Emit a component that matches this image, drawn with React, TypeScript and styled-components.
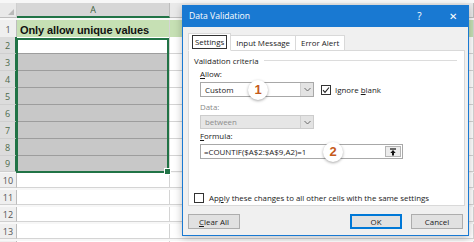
import React from 'react';
import styled, { createGlobalStyle } from 'styled-components';

const GlobalStyle = createGlobalStyle`
  html, body {
    margin: 0;
    padding: 0;
    width: 474px;
    height: 242px;
    overflow: hidden;
    background: #ffffff;
  }
`

const Stage = styled.div`
  position: relative;
  width: 474px;
  height: 242px;
  overflow: hidden;
  background: #ffffff;
`

/* ---------- spreadsheet ---------- */
const Sheet = styled.div`
  display: grid;
  grid-template-columns: 17px 153px 1fr;
  grid-auto-rows: 17px;
  width: 474px;
  padding-top: 3px;
  background: #f7f7f7;
  font-family: 'Open Sans', 'Noto Sans', sans-serif;
`

const Corner = styled.div`
  height: 15px;
  background: #e9e9e9;
  border-right: 1px solid #cfcfcf;
  border-bottom: 1px solid #bdbdbd;
  box-sizing: border-box;
  position: relative;
  &::after {
    content: '';
    position: absolute;
    right: 2px;
    bottom: 2px;
    border-left: 6px solid transparent;
    border-bottom: 6px solid #b9b9b9;
  }
`

const ColHead = styled.div<{ active?: boolean }>`
  height: 15px;
  box-sizing: border-box;
  display: flex;
  align-items: center;
  justify-content: center;
  font-size: 9px;
  color: ${p => (p.active ? '#3b5e3b' : '#555')};
  background: ${p => (p.active ? '#d6d6d6' : '#e9e9e9')};
  border-right: 1px solid #bdbdbd;
  border-bottom: ${p => (p.active ? '2px solid #217346' : '1px solid #bdbdbd')};
`

const RowHead = styled.div<{ active?: boolean; h: number }>`
  height: ${p => p.h}px;
  box-sizing: border-box;
  display: flex;
  align-items: center;
  justify-content: center;
  font-size: 9px;
  color: ${p => (p.active ? '#4d6b4d' : '#555')};
  background: ${p => (p.active ? '#dcdcdc' : '#efefef')};
  border-right: ${p => (p.active ? '2px solid #217346' : '1px solid #bdbdbd')};
  border-bottom: 1px solid #cfcfcf;
`

const Cell = styled.div<{ fill: string; line: string; h: number }>`
  height: ${p => p.h}px;
  box-sizing: border-box;
  background: ${p => p.fill};
  border-bottom: 1px solid ${p => p.line};
  border-right: 1px solid #d4d4d4;
  display: flex;
  align-items: center;
  padding-left: 3px;
`

const HeadText = styled.span`
  font-family: 'Liberation Sans', Arial, sans-serif;
  font-weight: 700;
  font-size: 11px;
  color: #111;
  letter-spacing: -0.1px;
`

const Selection = styled.div`
  position: absolute;
  left: 16px;
  top: 38px;
  width: 153px;
  height: 135px;
  border: 2px solid #217346;
  box-sizing: border-box;
  pointer-events: none;
  &::after {
    content: '';
    position: absolute;
    right: -4px;
    bottom: -4px;
    width: 5px;
    height: 5px;
    background: #217346;
    border: 1px solid #fff;
  }
`

/* ---------- dialog ---------- */
const Dialog = styled.div`
  position: absolute;
  left: 182px;
  top: 5px;
  width: 287px;
  height: 231px;
  display: flex;
  flex-direction: column;
  background: #f0f0f0;
  border: 1px solid #1979d2;
  border-top: none;
  box-sizing: border-box;
  box-shadow: 0 2px 8px rgba(0, 0, 0, 0.25);
  font-family: 'Open Sans', 'Noto Sans', sans-serif;
  font-size: 7.9px;
  color: #1a1a1a;
`

const TitleBar = styled.div`
  height: 22px;
  margin: 0 -1px;
  background: #1979d2;
  color: #fff;
  display: flex;
  align-items: center;
  padding: 0 0 0 7px;
  font-size: 8.6px;
  span:first-child {
    flex: 1;
  }
`

const TitleBtn = styled.span`
  width: 33px;
  text-align: center;
  font-size: 10px;
`

const Body = styled.div`
  flex: 1;
  display: flex;
  flex-direction: column;
  padding: 4px 3px 0 5px;
`

const Tabs = styled.div`
  display: flex;
  align-items: flex-end;
  height: 19px;
`

const Tab = styled.div<{ selected?: boolean }>`
  height: ${p => (p.selected ? 18 : 16)}px;
  box-sizing: border-box;
  padding: 0 5px;
  display: flex;
  align-items: center;
  background: #fff;
  border: 1px solid #d9d9d9;
  border-bottom: ${p => (p.selected ? '1px solid #fff' : '1px solid #d9d9d9')};
  margin-bottom: -1px;
  margin-left: ${p => (p.selected ? 0 : -1)}px;
  position: relative;
  z-index: ${p => (p.selected ? 2 : 1)};
`

const Focus = styled.span`
  outline: 1px solid #333;
  outline-offset: 1px;
  padding: 0 1px;
`

const Panel = styled.div`
  height: 156px;
  box-sizing: border-box;
  background: #fff;
  border: 1px solid #d9d9d9;
  padding: 4px 7px 0 5px;
  display: flex;
  flex-direction: column;
`

const Legend = styled.div`
  display: flex;
  align-items: center;
  gap: 5px;
  height: 11px;
  &::after {
    content: '';
    flex: 1;
    border-top: 1px solid #dcdcdc;
  }
`

const Group = styled.div`
  padding-left: 6px;
  display: flex;
  flex-direction: column;
`

const Label = styled.div<{ disabled?: boolean; gap?: number }>`
  height: 10px;
  line-height: 10px;
  margin-top: ${p => p.gap ?? 0}px;
  margin-bottom: 3px;
  color: ${p => (p.disabled ? '#8a8a8a' : '#1a1a1a')};
  u {
    text-decoration: underline;
  }
`

const FieldRow = styled.div`
  display: flex;
  align-items: center;
  gap: 7px;
  position: relative;
`

const Select = styled.div<{ disabled?: boolean; h: number }>`
  width: 114px;
  height: ${p => p.h}px;
  box-sizing: border-box;
  display: flex;
  align-items: center;
  border: 1px solid ${p => (p.disabled ? '#cccccc' : '#a8a8a8')};
  background: ${p => (p.disabled ? '#e6e6e6' : '#fff')};
  color: ${p => (p.disabled ? '#8d8d8d' : '#1a1a1a')};
  span {
    flex: 1;
    padding-left: 4px;
  }
`

const Arrow = styled.div`
  width: 12px;
  height: 100%;
  display: flex;
  align-items: center;
  justify-content: center;
  background: #e3e3e3;
  border-left: 1px solid #d0d0d0;
`

const Check = styled.div`
  display: flex;
  align-items: center;
  gap: 4px;
`

const Box = styled.div`
  width: 10px;
  height: 10px;
  box-sizing: border-box;
  border: 1px solid #333;
  background: #fff;
  display: flex;
  align-items: center;
  justify-content: center;
`

const Input = styled.div`
  width: 203px;
  height: 15px;
  box-sizing: border-box;
  display: flex;
  align-items: center;
  border: 1px solid #a8a8a8;
  background: #fff;
  padding: 0 1px 0 3px;
  span {
    flex: 1;
  }
`

const RefBtn = styled.div`
  width: 16px;
  height: 11px;
  box-sizing: border-box;
  border: 1px solid #b5b5b5;
  background: #ececec;
  display: flex;
  align-items: center;
  justify-content: center;
`

const Badge = styled.div<{ left: number }>`
  position: absolute;
  left: ${p => p.left}px;
  top: 50%;
  width: 20px;
  height: 20px;
  margin-top: -10px;
  border-radius: 50%;
  background: #fff;
  box-shadow: 0 1px 3px rgba(0, 0, 0, 0.35);
  display: flex;
  align-items: center;
  justify-content: center;
  font-family: 'Liberation Sans', Arial, sans-serif;
  font-weight: 700;
  font-size: 13px;
  color: #c55a1a;
`

const ApplyRow = styled.div`
  margin-top: 34px;
  display: flex;
  align-items: center;
  gap: 5px;
`

const Footer = styled.div`
  display: flex;
  align-items: center;
  gap: 9px;
  margin-top: 8px;
  padding-right: 2px;
`

const Spacer = styled.div`
  flex: 1;
`

const Button = styled.div<{ primary?: boolean }>`
  width: 52px;
  height: 15px;
  box-sizing: border-box;
  display: flex;
  align-items: center;
  justify-content: center;
  background: #e1e1e1;
  border: ${p => (p.primary ? '1px solid #0078d7' : '1px solid #adadad')};
  box-shadow: ${p => (p.primary ? 'inset 0 0 0 1px #0078d7' : 'none')};
  u {
    text-decoration: underline;
  }
`

const rows: { n: number; h: number }[] = [
  { n: 1, h: 20 },
  ...[2, 3, 4, 5, 6, 7, 8, 9].map(n => ({ n, h: n === 9 ? 16 : 17 })),
  ...[10, 11, 12, 13, 14].map(n => ({ n, h: 15 })),
]

function Chevron() {
  return (
    <svg width="7" height="5" viewBox="0 0 7 5">
      <path d="M0.5 1 L3.5 4 L6.5 1" fill="none" stroke="#6a6a6a" strokeWidth="1" />
    </svg>
  )
}

function Tick() {
  return (
    <svg width="8" height="8" viewBox="0 0 8 8">
      <path d="M1 4.2 L3 6.3 L7 1.5" fill="none" stroke="#222" strokeWidth="1.1" />
    </svg>
  )
}

function UpArrow() {
  return (
    <svg width="8" height="8" viewBox="0 0 8 8">
      <path d="M1 1 H7" stroke="#111" strokeWidth="1.2" />
      <path d="M4 2 L1.3 5 H3 V7.5 H5 V5 H6.7 Z" fill="#111" />
    </svg>
  )
}

function App() {
  return (
    <Stage>
      <GlobalStyle />
      <Sheet>
        <Corner />
        <ColHead active>A</ColHead>
        <ColHead />
        {rows.map(r => {
          const sel = r.n >= 2 && r.n <= 9
          const grey = r.n >= 3 && r.n <= 9
          const head = r.n === 1
          const fill = head ? '#c6e0b4' : grey ? '#c8c8c8' : '#ffffff'
          const line = head ? '#b4cfa2' : sel ? '#9d9d9d' : '#d4d4d4'
          return (
            <React.Fragment key={r.n}>
              <RowHead h={r.h} active={sel}>{r.n}</RowHead>
              <Cell h={r.h} fill={fill} line={line}>
                {head && <HeadText>Only allow unique values</HeadText>}
              </Cell>
              <Cell h={r.h} fill={head ? '#c6e0b4' : '#ffffff'} line={head ? '#b4cfa2' : '#d4d4d4'} />
            </React.Fragment>
          )
        })}
      </Sheet>
      <Selection />

      <Dialog>
        <TitleBar>
          <span>Data Validation</span>
          <TitleBtn>?</TitleBtn>
          <TitleBtn>✕</TitleBtn>
        </TitleBar>
        <Body>
          <Tabs>
            <Tab selected><Focus>Settings</Focus></Tab>
            <Tab>Input Message</Tab>
            <Tab>Error Alert</Tab>
          </Tabs>
          <Panel>
            <Legend>Validation criteria</Legend>
            <Group>
              <Label gap={3}><u>A</u>llow:</Label>
              <FieldRow>
                <Select h={15}>
                  <span>Custom</span>
                  <Arrow><Chevron /></Arrow>
                </Select>
                <Check>
                  <Box><Tick /></Box>
                  <span>Ignore <u>b</u>lank</span>
                </Check>
                <Badge left={48}>1</Badge>
              </FieldRow>
              <Label disabled gap={5}>Data:</Label>
              <Select disabled h={14}>
                <span>between</span>
                <Arrow><Chevron /></Arrow>
              </Select>
              <Label gap={2}><u>F</u>ormula:</Label>
              <FieldRow>
                <Input>
                  <span>=COUNTIF($A$2:$A$9,A2)=1</span>
                  <RefBtn><UpArrow /></RefBtn>
                </Input>
                <Badge left={123}>2</Badge>
              </FieldRow>
            </Group>
            <ApplyRow>
              <Box />
              <span>Ap<u>p</u>ly these changes to all other cells with the same settings</span>
            </ApplyRow>
          </Panel>
          <Footer>
            <Button><u>C</u>lear All</Button>
            <Spacer />
            <Button primary>OK</Button>
            <Button>Cancel</Button>
          </Footer>
        </Body>
      </Dialog>
    </Stage>
  );
}

export default App;
